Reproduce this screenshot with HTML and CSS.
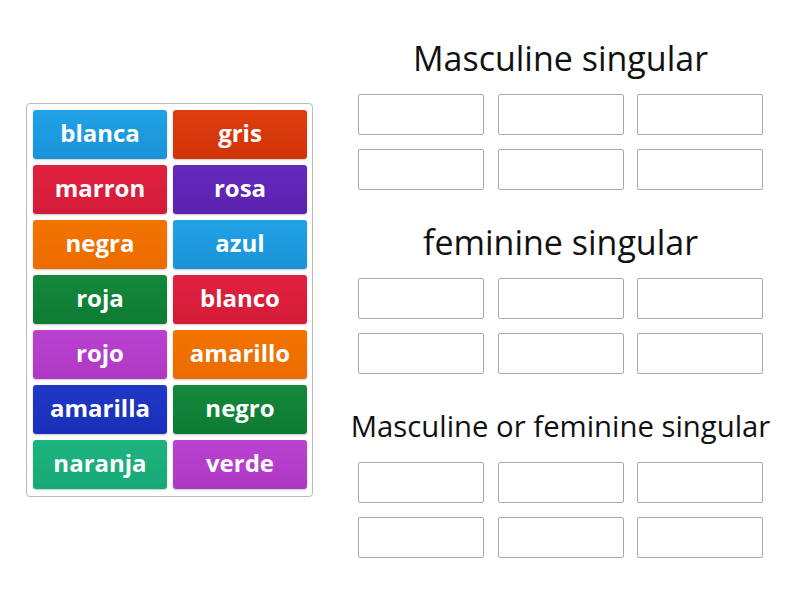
FILE: index.html
```html
<!DOCTYPE html>
<html lang="en">

<head>
    <meta charset="UTF-8">
    <title>Group sort</title>
    <link rel="stylesheet" href="styles.css">
</head>

<body>
    <div class="page">
        <div class="tiles">
            <div class="tile blue">blanca</div>
            <div class="tile rust">gris</div>
            <div class="tile crimson">marron</div>
            <div class="tile purple">rosa</div>
            <div class="tile orange">negra</div>
            <div class="tile blue">azul</div>
            <div class="tile green">roja</div>
            <div class="tile crimson">blanco</div>
            <div class="tile magenta">rojo</div>
            <div class="tile orange">amarillo</div>
            <div class="tile navy">amarilla</div>
            <div class="tile green">negro</div>
            <div class="tile teal">naranja</div>
            <div class="tile magenta">verde</div>
        </div>

        <div class="groups">
            <div class="group">
                <div class="group-title">Masculine singular</div>
                <div class="slots">
                    <div class="slot"></div><div class="slot"></div><div class="slot"></div>
                    <div class="slot"></div><div class="slot"></div><div class="slot"></div>
                </div>
            </div>
            <div class="group">
                <div class="group-title">feminine singular</div>
                <div class="slots">
                    <div class="slot"></div><div class="slot"></div><div class="slot"></div>
                    <div class="slot"></div><div class="slot"></div><div class="slot"></div>
                </div>
            </div>
            <div class="group">
                <div class="group-title small">Masculine or feminine singular</div>
                <div class="slots">
                    <div class="slot"></div><div class="slot"></div><div class="slot"></div>
                    <div class="slot"></div><div class="slot"></div><div class="slot"></div>
                </div>
            </div>
        </div>
    </div>
</body>

</html>
```

FILE: styles.css
```css
body {
    margin: 0;
    background: #fff;
    font-family: "Open Sans", "DejaVu Sans", sans-serif;
}

.page {
    width: 800px;
    height: 600px;
    display: flex;
    align-items: flex-start;
}

.tiles {
    margin: 103px 0 0 26px;
    padding: 6px 5px 7px 6px;
    border: 1px solid #b9b9b9;
    border-radius: 4px;
    display: grid;
    grid-template-columns: 134px 134px;
    grid-auto-rows: 49px;
    gap: 6px;
}

.tile {
    padding-bottom: 4px;
    border-radius: 3px;
    color: #fff;
    font-weight: 700;
    font-size: 24px;
    display: flex;
    align-items: center;
    justify-content: center;
    box-shadow: 0 1px 2px rgba(0, 0, 0, 0.22);
}

.blue { background: linear-gradient(#22a2e6, #1a92d8); }
.rust { background: linear-gradient(#de3e0e, #d1340a); }
.crimson { background: linear-gradient(#e0223f, #d31b38); }
.purple { background: linear-gradient(#6529bc, #5a22ad); }
.orange { background: linear-gradient(#f47400, #ea6c00); }
.green { background: linear-gradient(#14893c, #0e7b33); }
.magenta { background: linear-gradient(#bb42d1, #ae38c4); }
.navy { background: linear-gradient(#2038c8, #1a2fb8); }
.teal { background: linear-gradient(#1db480, #17a875); }

.groups {
    margin: 33px 0 0 45px;
    width: 405px;
    display: flex;
    flex-direction: column;
    gap: 27px;
}

.group-title {
    height: 50px;
    margin-bottom: 11px;
    display: flex;
    justify-content: center;
    align-items: center;
    font-size: 34px;
    color: #111;
    white-space: nowrap;
}

.group-title.small {
    font-size: 29.3px;
}

.slots {
    display: grid;
    grid-template-columns: repeat(3, 126px);
    grid-auto-rows: 41px;
    column-gap: 13.5px;
    row-gap: 14px;
}

.slot {
    border: 1px solid #a9a9a9;
    border-radius: 2px;
}
```
